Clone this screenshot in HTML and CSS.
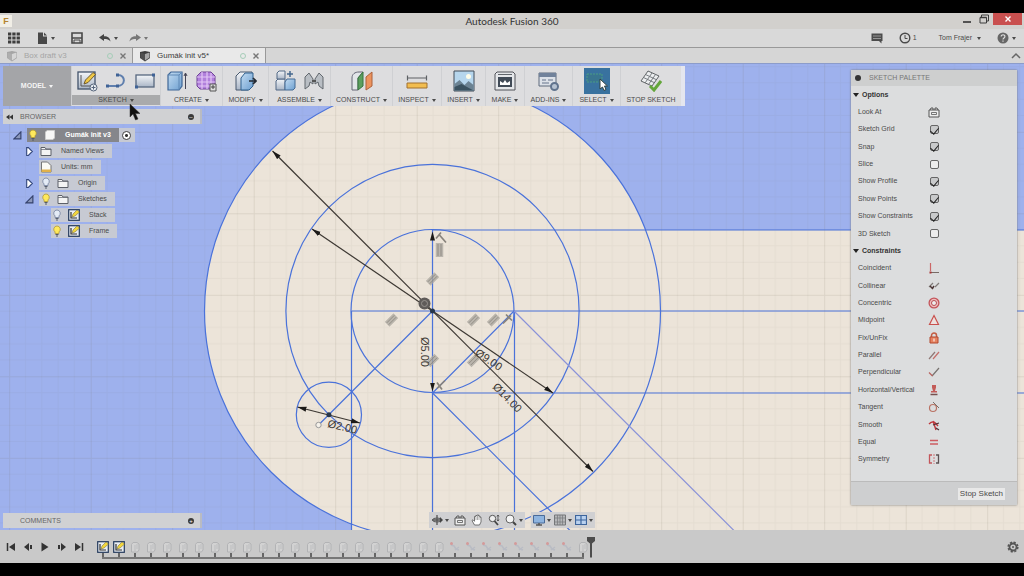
FILE: index.html
```html
<!DOCTYPE html>
<html lang="en">
<head>
<meta charset="utf-8">
<title>Autodesk Fusion 360</title>
<link rel="stylesheet" href="styles.css">
</head>
<body>
<svg class="defs" aria-hidden="true">
  <defs>
    <linearGradient id="blue" x1="0" y1="0" x2="1" y2="1"><stop offset="0" stop-color="#c3dcf2"/><stop offset="1" stop-color="#6d9fd0"/></linearGradient>
    <linearGradient id="steel" x1="0" y1="0" x2="0" y2="1"><stop offset="0" stop-color="#f4f6f9"/><stop offset="1" stop-color="#a9b5c6"/></linearGradient>
    <symbol id="folder" viewBox="0 0 12 12"><path d="M1 2.500h4l1 1.500h5v6.500H1z" fill="#f4f4f4" stroke="#5c6068"/><path d="M1 4.500h10" stroke="#5c6068" stroke-width=".7"/></symbol>
    <symbol id="bulb-on" viewBox="0 0 12 12"><path d="M6 1a3.300 3.300 0 0 1 2 5.900V8.500H4V6.900A3.300 3.300 0 0 1 6 1z" fill="#ffe95c" stroke="#b39b35" stroke-width=".8"/><path d="M4.500 9.500h3M5 11h2" stroke="#555b66"/></symbol>
    <symbol id="bulb-off" viewBox="0 0 12 12"><path d="M6 1a3.300 3.300 0 0 1 2 5.900V8.500H4V6.900A3.300 3.300 0 0 1 6 1z" fill="#e4ebf6" stroke="#7482a0" stroke-width=".8"/><path d="M4.500 9.500h3M5 11h2" stroke="#59606e"/></symbol>
    <symbol id="sketch" viewBox="0 0 12 12"><rect x=".7" y=".7" width="10.600" height="10.600" fill="#e9edf2" stroke="#243a5c" stroke-width="1.200"/><path d="M3 3v6h6" fill="none" stroke="#333" stroke-width="1.200"/><path d="M4 8l1-3 4-4 2.500 2-4.500 4z" fill="#f3d73c" stroke="#6b6330" stroke-width=".5"/></symbol>
    <symbol id="open" viewBox="0 0 8 8"><path d="M7 .8V7H.8z" fill="#8c98bc" stroke="#33406a"/></symbol>
    <symbol id="closed" viewBox="0 0 8 8"><path d="M1.500.5h1.500L6.500 4 3 7.500H1.500z" fill="#fff" stroke="#33477d"/></symbol>
    <symbol id="cube" viewBox="0 0 12 12"><path d="M1 2l5-1 5 1v6l-5 3.500L1 8z" fill="currentColor"/><path d="M1.500 2.500L6 4v7l-4.500-3z" fill="#fff" fill-opacity=".1"/><path d="M6 4l4.500-1.500v5L6 10.500z" fill="#fff" fill-opacity=".55"/></symbol>
    <symbol id="ghost" viewBox="0 0 12 12"><path d="M2.500 3.500L4 1.500h4l2 1.500v6l-1.500 2h-6z" fill="#d2d2d2" stroke="#b2b3b5"/><path d="M6 4v6M8 3v5" stroke="#bcbdbf"/></symbol>
    <symbol id="joint" viewBox="0 0 12 12"><path d="M2 4l3 1 2 3 3 1M6 9l4-3" fill="none" stroke="#b9bcc4" stroke-width="1.500"/><circle cx="2.500" cy="2.500" r="1.500" fill="#d49a9a"/></symbol>
    <symbol id="lookat" viewBox="0 0 12 12"><path d="M1 4h10v7H1zM2 4l1-2h2v2m2 0V2h2l1 2" fill="#ededed" stroke="#555"/><path d="M3.500 6.500h5v2h-5z" fill="none" stroke="#555" stroke-width=".8"/></symbol>
    <symbol id="x" viewBox="0 0 8 8"><path d="M1.500 1.500l5 5m0-5l-5 5" stroke="currentColor" stroke-width="1.400"/></symbol>
    <symbol id="plate" viewBox="0 0 16 8"><path d="M1 0h14v8H1z" fill="#aaa69e" fill-opacity=".75"/><path d="M2 2.500h12M2 5.500h12" stroke="#858178" stroke-width=".8"/></symbol>
  </defs>
</svg>

<div class="app">
  <header class="titlebar">
    <span class="logo">F</span>
    <h1 class="title">Autodesk Fusion 360</h1>
    <div class="window-buttons">
      <button aria-label="Minimize"><svg viewBox="0 0 10 10"><path d="M1 8h8" stroke="#444" stroke-width="1.800"/></svg></button>
      <button aria-label="Restore"><svg viewBox="0 0 10 10"><path d="M1 3.500h6.500v5.500H1zM2.500 3V1H9.500v6H8" fill="none" stroke="#3c3c3c"/><path d="M1 3.500h6.500" stroke="#3c3c3c" stroke-width="1.500"/></svg></button>
      <button class="close" aria-label="Close"><svg viewBox="0 0 8 8"><use href="#x"/></svg></button>
    </div>
  </header>

  <nav class="quickbar" aria-label="Quick access">
    <div class="quick-left">
      <button aria-label="Data panel"><svg viewBox="0 0 12 12"><path d="M0 2h12M0 6h12M0 10h12" stroke="#3e3e3e" stroke-width="3" stroke-dasharray="3.300 1"/></svg></button>
      <button class="caret" aria-label="File"><svg viewBox="0 0 12 12"><path d="M2 .5h5v4h4V12H2z" fill="#484848"/><path d="M8 .5L11 3.500H8z" fill="#484848"/></svg></button>
      <button aria-label="Save"><svg viewBox="0 0 12 12"><path d="M1 1h10v10H1z" fill="none" stroke="#484848" stroke-width="1.600"/><path d="M3 11V8h6v3" fill="none" stroke="#484848"/><path d="M1 6h10" stroke="#484848" stroke-width="1.500"/></svg></button>
      <button class="caret" aria-label="Undo"><svg viewBox="0 0 12 12"><path d="M0 5.500L5 2v2.300c4 0 6 1.700 6.500 5.200C10 7.500 8 7 5 7v2z" fill="#444"/></svg></button>
      <button class="caret muted" aria-label="Redo"><svg viewBox="0 0 12 12"><path d="M12 5.500L7 2v2.300C3 4.300 1 6 .5 9.500 2 7.500 4 7 7 7v2z" fill="#777"/></svg></button>
    </div>
    <div class="quick-right">
      <button aria-label="Comments"><svg viewBox="0 0 12 12"><path d="M.5 1.500h11v7.500h-1v2.500L8 9H.5z" fill="#4c4c4c"/><path d="M2 4h8M2 6.500h8" stroke="#aaa" stroke-width=".8"/></svg></button>
      <button class="jobs" aria-label="Job status"><svg viewBox="0 0 12 12"><circle cx="6" cy="6" r="4.800" fill="none" stroke="#4a4a4a" stroke-width="1.400"/><path d="M6 3v3.500h2.500" fill="none" stroke="#4a4a4a"/></svg>1</button>
      <button class="caret user">Tom Frajer</button>
      <button class="caret" aria-label="Help"><svg viewBox="0 0 12 12"><circle cx="6" cy="6" r="5.500" fill="#666"/><path d="M4.200 4.500c0-2.400 3.800-2.200 3.700 0C7.900 6 6 5.800 6 7.500M6 8.500v1.200" fill="none" stroke="#ddd" stroke-width="1.200"/></svg></button>
    </div>
  </nav>

  <div class="tabs">
    <div class="tab"><svg class="doc"><use href="#cube"/></svg><a href="#box">Box draft v3</a><i class="ring"></i><button aria-label="Close Box draft"><svg><use href="#x"/></svg></button></div>
    <div class="tab active"><svg class="doc"><use href="#cube"/></svg><a href="#gumak">Gumák init v5*</a><i class="ring"></i><button aria-label="Close Gumák init"><svg><use href="#x"/></svg></button></div>
    <button class="collapse" aria-label="Collapse toolbar"><svg viewBox="0 0 10 8"><path d="M1 6l4-4 4 4" fill="none" stroke="#666" stroke-width="1.500"/></svg></button>
  </div>

  <main class="workspace">
    <svg class="drawing" viewBox="0 63 1024 467" preserveAspectRatio="xMidYMid slice" role="img" aria-label="Sketch with concentric circles">
      <defs>
        <pattern id="grid" x="416.700" y="294.300" width="81.500" height="81.500" patternUnits="userSpaceOnUse">
          <path d="M16.300 0v81.500M32.600 0v81.500M48.900 0v81.500M65.200 0v81.500M0 16.300h81.500M0 32.600h81.500M0 48.900h81.500M0 65.200h81.500" stroke="#6a6350" stroke-opacity=".06"/>
          <path d="M.5 0v81.500M0 .5h81.500" stroke="#6a6350" stroke-opacity=".13"/>
        </pattern>
        <marker id="arrow" viewBox="0 0 9 6" refX="9" refY="3" markerWidth="9" markerHeight="6" markerUnits="userSpaceOnUse" orient="auto-start-reverse"><path d="M0 .5L9 3 0 5.500z" fill="#1c1a18"/></marker>
      </defs>
      <rect y="0" width="1024" height="600" fill="#9eb1ed"/>
      <g fill="#ece4d9">
        <circle cx="432.500" cy="310.500" r="228"/>
        <path d="M432.500 229.500H1024V600H351.500V310z"/>
      </g>
      <rect width="1024" height="600" fill="url(#grid)"/>
      <g fill="none" stroke="#4a72da" stroke-width="1.200">
        <circle cx="432.500" cy="310.500" r="228"/>
        <circle cx="432.500" cy="310.500" r="146.600"/>
        <circle cx="432.500" cy="310.500" r="81.500"/>
        <circle cx="328.900" cy="414.300" r="32.600"/>
        <path d="M432.500 229.500H1024M351.500 310.500H1024M432.500 392.500H1024M351.500 310.500V600M432.500 229.500V600M514.500 310.500V600"/>
        <path d="M320 423L432.500 310.500M514 310.500L432.500 392.500L620 580"/>
        <path d="M514 310.500L784 580" stroke="#8a92d8"/>
      </g>
      <g stroke="#3d3833" stroke-width="1.200" fill="none">
        <path d="M272.500 150.500L593 471" marker-start="url(#arrow)" marker-end="url(#arrow)"/>
        <path d="M312 228.500L553 392.500" marker-start="url(#arrow)" marker-end="url(#arrow)"/>
        <path d="M297.500 406.500L360 422.500" marker-start="url(#arrow)" marker-end="url(#arrow)"/>
        <path d="M432.500 231V391" stroke="none" marker-start="url(#arrow)" marker-end="url(#arrow)"/>
      </g>
      <g>
        <use href="#plate" x="-8" y="-4" width="16" height="8" transform="translate(439.500 249.500) rotate(90)"/>
        <use href="#plate" x="-7" y="-3.500" width="14" height="7" transform="translate(432.500 278.500) rotate(-45)"/>
        <use href="#plate" x="-7" y="-3.500" width="14" height="7" transform="translate(391.500 319.500) rotate(-45)"/>
        <use href="#plate" x="-7" y="-3.500" width="14" height="7" transform="translate(473.500 319.500) rotate(-45)"/>
        <use href="#plate" x="-7" y="-3.500" width="14" height="7" transform="translate(493.500 319.500) rotate(-45)"/>
        <use href="#plate" x="-7" y="-3.500" width="14" height="7" transform="translate(432.500 360) rotate(-45)"/>
        <use href="#plate" x="-7" y="-3.500" width="14" height="7" transform="translate(473.500 360) rotate(-45)"/>
        <path d="M436 238l5-6M439 234l7 8M503 323l8-8M506 314l6 6M437 388l8-8M437 382l5 7" fill="none" stroke="#88837c" stroke-width="1.700"/>
      </g>
      <circle cx="424.500" cy="303" r="6" fill="#5f5b59"/>
      <circle cx="424.500" cy="303" r="3" fill="none" stroke="#96918d"/>
      <circle cx="432.500" cy="310.500" r="2.500" fill="#26364c"/>
      <circle cx="328.900" cy="414.300" r="2.500" fill="#26364c"/>
      <circle cx="318.500" cy="424.500" r="2.700" fill="#f5f1ea" stroke="#999"/>
      <g class="dimension">
        <text transform="translate(425 351.500) rotate(90)" y="4">Ø5.00</text>
        <text transform="translate(489 359) rotate(34)" y="4">Ø9.00</text>
        <text transform="translate(507.500 397) rotate(45)" y="4">Ø14.00</text>
        <text transform="translate(342.500 426) rotate(13)" y="4">Ø2.00</text>
      </g>
    </svg>

    <div class="overlay">
      <div class="left">
        <div class="toolbar" role="toolbar" aria-label="Tools">
          <button class="model caret">MODEL</button>
          <div class="group sketch-group">
            <div class="tools">
              <button aria-label="Create sketch"><svg viewBox="0 0 22 22"><rect x="2" y="2" width="17" height="17" fill="url(#steel)" stroke="#42536b" stroke-width="1.300"/><path d="M5 5v11h10" fill="none" stroke="#555"/><path d="M8 14l1.500-4L17 2.500l2.500 2L12 12.500z" fill="#f0c844" stroke="#6f5a2d"/><circle cx="17.500" cy="17.500" r="3.500" fill="#e8edf3" stroke="#56657a"/><path d="M15.500 17.500h4m-2-2v4" stroke="#56657a"/></svg></button>
              <button aria-label="Line"><svg viewBox="0 0 22 22"><path d="M2 16h10c9 0 9-11 1-11" fill="none" stroke="#5f7fae" stroke-width="2"/><path d="M1 14.500h3v3H1zM11 14.500h3v3h-3zM11 3.500h3v3h-3z" fill="#3f6296"/></svg></button>
              <button aria-label="Rectangle"><svg viewBox="0 0 22 22"><rect x="2" y="5" width="18" height="12" fill="url(#steel)" stroke="#56677f" stroke-width="1.300"/><path d="M1 15.500h3v3H1zM18 3.500h3v3h-3z" fill="#3f6296"/></svg></button>
            </div>
            <button class="label caret">SKETCH</button>
          </div>
          <div class="group create">
            <div class="tools">
              <button aria-label="Extrude"><svg viewBox="0 0 22 22"><path d="M2 5l3-3h11v14l-3 4H2z" fill="url(#blue)" stroke="#3e6697" stroke-width="1.200"/><path d="M2 5h11v15M13 5l3-3" fill="none" stroke="#5f88b5"/><path d="M19.500 4v15M18 6l1.500-3L21 6" fill="none" stroke="#445"/></svg></button>
              <button aria-label="Form"><svg viewBox="0 0 22 22"><path d="M2 6l4-4h10l4 4v10l-4 3H5l-3-3z" fill="#b180dc" stroke="#6e4396"/><path d="M7 2v17M12 2v17M16 3v16M2 7h18M2 12h18M3 16h16" stroke="#e3c6f6" stroke-width="1.200"/><path d="M15 14h6v7h-6z" fill="#ddd" stroke="#555"/><path d="M16 17h4m-2-2v4" stroke="#444"/></svg></button>
            </div>
            <button class="label caret">CREATE</button>
          </div>
          <div class="group modify">
            <div class="tools"><button aria-label="Press pull"><svg viewBox="0 0 22 22"><path d="M1 6l4-4h12v14l-4 4H1z" fill="url(#steel)" stroke="#48596e"/><path d="M6 8l4-5h8v13l-4 4H6z" fill="url(#blue)" stroke="#2f618f"/><path d="M14 11h6m-2-3l3 3-3 3" fill="none" stroke="#252b33" stroke-width="1.700"/></svg></button></div>
            <button class="label caret">MODIFY</button>
          </div>
          <div class="group assemble">
            <div class="tools">
              <button aria-label="New component"><svg viewBox="0 0 22 22"><path d="M2 11l2-2h7v11H2z" fill="url(#steel)" stroke="#526985"/><path d="M11 12l2-3h8v9l-2 2h-8z" fill="url(#blue)" stroke="#456a94"/><path d="M3 3l2-2h6v8H3z" fill="url(#steel)" stroke="#526985"/><path d="M13 4h6m-3-3v6" stroke="#45688e" stroke-width="1.500"/></svg></button>
              <button aria-label="Joint"><svg viewBox="0 0 22 22"><path d="M2 19V7l4-4 4 6v5l-3-2-1 4zM20 19V7l-4-4-4 6v5l3-2 1 4z" fill="#b9bec4" stroke="#62686e"/><path d="M9 11h4" stroke="#555" stroke-width="2"/></svg></button>
            </div>
            <button class="label caret">ASSEMBLE</button>
          </div>
          <div class="group construct">
            <div class="tools"><button aria-label="Offset plane"><svg viewBox="0 0 22 22"><path d="M1 20V8c0-4 3-6 7-6h4l-5 6v12z" fill="#e2e5e9" stroke="#667"/><path d="M7 20V8l5-6v14z" fill="#5c9f5e" stroke="#36743e"/><path d="M15 20V7l6-5v14z" fill="#ec935e" stroke="#ad613b"/></svg></button></div>
            <button class="label caret">CONSTRUCT</button>
          </div>
          <div class="group inspect">
            <div class="tools"><button aria-label="Measure"><svg viewBox="0 0 22 22"><path d="M1 8h20M1.500 5.500v5M20.500 5.500v5" stroke="#5e6165" stroke-width="1.200"/><path d="M1 13h20v5H1z" fill="#f2bd50" stroke="#a1712e"/></svg></button></div>
            <button class="label caret">INSPECT</button>
          </div>
          <div class="group insert">
            <div class="tools"><button aria-label="Insert image"><svg viewBox="0 0 22 22"><path d="M1 1h20v20H1z" fill="#b6d6ed" stroke="#424d58"/><path d="M1.500 14l5-4 5 5 4-4 5 4v5.500h-19z" fill="#6c8393"/><path d="M1.500 17l7-3 12 6.500h-19z" fill="#3b5260"/><circle cx="15.500" cy="6.500" r="2.500" fill="#fffde9"/></svg></button></div>
            <button class="label caret">INSERT</button>
          </div>
          <div class="group make">
            <div class="tools"><button aria-label="3D print"><svg viewBox="0 0 22 22"><path d="M1 4l2-2h16l2 2v16H1z" fill="#e5e7ea" stroke="#505258"/><path d="M4 7h14v10H4z" fill="#414b57"/><path d="M6 15v-4l3 2 2-3 2 3 3-2v4z" fill="#fff"/><path d="M4 4.500h14" stroke="#60656b"/></svg></button></div>
            <button class="label caret">MAKE</button>
          </div>
          <div class="group addins">
            <div class="tools"><button aria-label="Scripts"><svg viewBox="0 0 22 22"><path d="M1 3h17v13H1z" fill="#dce1e8" stroke="#5f6b7d"/><path d="M1 3h17v4H1z" fill="#71829b"/><path d="M4 10h4m2 0h5M4 13h7" stroke="#66758b"/><circle cx="16.500" cy="16.500" r="3.500" fill="#b7c3d2" stroke="#61748e" stroke-width="2"/></svg></button></div>
            <button class="label caret">ADD-INS</button>
          </div>
          <div class="group select">
            <div class="tools"><button class="pressed" aria-label="Select"><svg viewBox="0 0 26 26"><path d="M3 6h15v8H3z" fill="#39758f" stroke="#4b9c84" stroke-dasharray="2 1"/><path d="M16 11v10l2.500-2 1.500 3.500 2-1-1.500-3.500h3z" fill="#fff" stroke="#344"/></svg></button></div>
            <button class="label caret">SELECT</button>
          </div>
          <div class="group stop">
            <div class="tools"><button aria-label="Stop sketch"><svg viewBox="0 0 22 22"><path d="M8 1l11 5-7 10L1 11z" fill="#eceef0" stroke="#5e6265"/><path d="M12 3L5 13M15.500 4.500L8.500 14.500M5.500 4.500l10.500 5M3.500 7.500l10.500 5" stroke="#777b80"/><path d="M10 16l4 4 7-9" fill="none" stroke="#64a63b" stroke-width="3"/></svg></button></div>
            <button class="label">STOP SKETCH</button>
          </div>
        </div>

        <section class="browser">
          <header class="panel-bar"><button class="rewind" aria-label="Hide browser"><svg viewBox="0 0 8 6"><path d="M4 0v6L0 3zM8 0v6L4 3z" fill="#333"/></svg></button><h2>BROWSER</h2><button class="dot" aria-label="Browser options">–</button></header>
          <ul class="tree">
            <li class="root"><svg class="twist"><use href="#open"/></svg><span class="chip dark"><svg><use href="#bulb-on"/></svg><svg viewBox="0 0 12 12"><path d="M1.500 3L3 1.500h7.500V9L9 10.500H1.500z" fill="#f7f7f7" stroke="#ccc"/></svg><b>Gumák init v3</b></span><label class="activate"><input type="radio" name="active" checked aria-label="Activate"></label></li>
            <li class="child"><svg class="twist"><use href="#closed"/></svg><span class="chip"><svg><use href="#folder"/></svg>Named Views</span></li>
            <li class="child"><i class="twist"></i><span class="chip"><svg viewBox="0 0 12 12"><path d="M1.500 1h6L11 4.500V11H1.500z" fill="#fbfaf4" stroke="#777"/><path d="M1.500 8.500H11V11H1.500z" fill="#e1b14a"/></svg>Units: mm</span></li>
            <li class="child"><svg class="twist"><use href="#closed"/></svg><span class="chip"><svg><use href="#bulb-off"/></svg><svg><use href="#folder"/></svg>Origin</span></li>
            <li class="child"><svg class="twist"><use href="#open"/></svg><span class="chip"><svg><use href="#bulb-on"/></svg><svg><use href="#folder"/></svg>Sketches</span></li>
            <li class="leaf"><span class="chip"><svg><use href="#bulb-off"/></svg><svg><use href="#sketch"/></svg>Stack</span></li>
            <li class="leaf"><span class="chip"><svg><use href="#bulb-on"/></svg><svg><use href="#sketch"/></svg>Frame</span></li>
          </ul>
        </section>

        <section class="comments panel-bar"><h2>COMMENTS</h2><button class="dot" aria-label="Add comment">+</button></section>
      </div>

      <aside class="palette">
        <header><i class="bullet"></i><h2>SKETCH PALETTE</h2></header>
        <div class="rows">
          <h3>Options</h3>
          <div class="row"><label for="look">Look At</label><button id="look"><svg><use href="#lookat"/></svg></button></div>
          <div class="row"><label for="g">Sketch Grid</label><input id="g" type="checkbox" checked></div>
          <div class="row"><label for="s">Snap</label><input id="s" type="checkbox" checked></div>
          <div class="row"><label for="sl">Slice</label><input id="sl" type="checkbox"></div>
          <div class="row"><label for="pr">Show Profile</label><input id="pr" type="checkbox" checked></div>
          <div class="row"><label for="po">Show Points</label><input id="po" type="checkbox" checked></div>
          <div class="row"><label for="co">Show Constraints</label><input id="co" type="checkbox" checked></div>
          <div class="row"><label for="td">3D Sketch</label><input id="td" type="checkbox"></div>
          <h3>Constraints</h3>
          <div class="row"><label for="c1">Coincident</label><button id="c1"><svg viewBox="0 0 12 12"><path d="M2.500 1v8" stroke="#c66" stroke-width="1.200"/><path d="M3 10.500h8" stroke="#776b66"/><path d="M1.500 9.500h2v2h-2z" fill="#a33"/></svg></button></div>
          <div class="row"><label for="c2">Collinear</label><button id="c2"><svg viewBox="0 0 12 12"><path d="M1 7l4-4M7 7l4-4" stroke="#807b78" stroke-width="1.200"/><path d="M2 6l3 3M4 9l2-3" stroke="#4b3535" stroke-width="1.500"/></svg></button></div>
          <div class="row"><label for="c3">Concentric</label><button id="c3"><svg viewBox="0 0 12 12"><circle cx="6" cy="6" r="4.900" fill="#eebcbc" stroke="#c4545a" stroke-width="1.300"/><circle cx="6" cy="6" r="2.500" fill="#eee" stroke="#b84c52"/></svg></button></div>
          <div class="row"><label for="c4">Midpoint</label><button id="c4"><svg viewBox="0 0 12 12"><path d="M6 1.500l4.500 9h-9z" fill="#eee1df" stroke="#c9504d" stroke-width="1.200"/></svg></button></div>
          <div class="row"><label for="c5">Fix/UnFix</label><button id="c5"><svg viewBox="0 0 12 12"><path d="M3.500 5V3.500a2.500 2.500 0 0 1 5 0V5" fill="none" stroke="#c35d42" stroke-width="1.500"/><path d="M2 5h8v6H2z" fill="#e68361" stroke="#b3492e"/><path d="M6 6.500v3" stroke="#fff"/></svg></button></div>
          <div class="row"><label for="c6">Parallel</label><button id="c6"><svg viewBox="0 0 12 12"><path d="M1 10l6-7" stroke="#8f7774" stroke-width="1.200"/><path d="M5 10l6-7" stroke="#c46e69" stroke-width="1.200"/></svg></button></div>
          <div class="row"><label for="c7">Perpendicular</label><button id="c7"><svg viewBox="0 0 12 12"><path d="M4 10l7-8" stroke="#77716e" stroke-width="1.200"/><path d="M1 6.500L4.500 10" stroke="#b9625f" stroke-width="1.200"/></svg></button></div>
          <div class="row"><label for="c8">Horizontal/Vertical</label><button id="c8"><svg viewBox="0 0 12 12"><path d="M4 1h4v2.500L7 7h2v1.500H3V7h2L4 3.500z" fill="#c35b58"/><path d="M2.500 10.500h7" stroke="#78504e" stroke-width="1.500"/></svg></button></div>
          <div class="row"><label for="c9">Tangent</label><button id="c9"><svg viewBox="0 0 12 12"><circle cx="5" cy="7" r="3.500" fill="none" stroke="#ba7264" stroke-width="1.200"/><path d="M5 1l6 6" stroke="#796d66"/></svg></button></div>
          <div class="row"><label for="c10">Smooth</label><button id="c10"><svg viewBox="0 0 12 12"><path d="M1 5c4-4 6-2 9 2M5 2l3 9" fill="none" stroke="#bf363b" stroke-width="1.400"/><path d="M5 6l6-2M8 9l3 2" stroke="#4d3539" stroke-width="1.200"/></svg></button></div>
          <div class="row"><label for="c11">Equal</label><button id="c11"><svg viewBox="0 0 12 12"><path d="M2 4.500h8M2 8h8" stroke="#cc5c61" stroke-width="1.300"/></svg></button></div>
          <div class="row"><label for="c12">Symmetry</label><button id="c12"><svg viewBox="0 0 12 12"><path d="M4 2H1.500v8H4" fill="none" stroke="#c4555a" stroke-width="1.300"/><path d="M8 2h2.500v8H8" fill="none" stroke="#5b5052" stroke-width="1.300"/><path d="M6 1v10" stroke="#d07579" stroke-dasharray="2 1"/></svg></button></div>
        </div>
        <footer><button class="finish">Stop Sketch</button></footer>
      </aside>
    </div>

    <div class="navbar">
      <div>
        <button class="caret" aria-label="Orbit"><svg viewBox="0 0 12 12"><path d="M6 1v10M1 6h10" stroke="#555" stroke-width="1.300"/><ellipse cx="6" cy="6" rx="4.500" ry="2" fill="none" stroke="#555"/><path d="M9 3l3 3-3 3z" fill="#444"/></svg></button>
        <button aria-label="Look at"><svg><use href="#lookat"/></svg></button>
        <button aria-label="Pan"><svg viewBox="0 0 12 12"><path d="M3.500 11L1 6.500l1-.7 1.500 1.500V2.500h1.300V1.500h1.400V1h1.400v1h1.300v1.200H10V8l-1.500 3z" fill="#fff" stroke="#555" stroke-width=".8"/><path d="M5 2.500V6m1.500-4v4M8 2.500V6" stroke="#777" stroke-width=".6"/></svg></button>
        <button aria-label="Zoom"><svg viewBox="0 0 12 12"><circle cx="4.500" cy="4.500" r="3.200" fill="#eee" stroke="#555"/><path d="M6.500 7l3.500 4" stroke="#444" stroke-width="1.800"/><path d="M10 1v6M9 2.500L10 1l1 1.500M9 5.500L10 7l1-1.500" fill="none" stroke="#444" stroke-width=".8"/></svg></button>
        <button class="caret" aria-label="Fit"><svg viewBox="0 0 12 12"><circle cx="5" cy="5" r="4" fill="#f4f4f4" stroke="#666"/><path d="M8 8l3 3" stroke="#444" stroke-width="2"/></svg></button>
      </div>
      <div>
        <button class="caret" aria-label="Display"><svg viewBox="0 0 12 12"><path d="M.5 1.500h11V9H.5z" fill="#8eb4df" stroke="#496a98"/><path d="M3 11h6M6 9v2" stroke="#555" stroke-width="1.500"/></svg></button>
        <button class="caret" aria-label="Grid"><svg viewBox="0 0 12 12"><path d="M.5 1h11v10H.5z" fill="#b6b7b9" stroke="#757779"/><path d="M3.500 1v10M6 1v10M8.500 1v10M1 4h10M1 8h10" stroke="#77797b" stroke-width=".7"/></svg></button>
        <button class="caret" aria-label="Viewports"><svg viewBox="0 0 12 12"><path d="M.5 1.500h11v9H.5zM6 1.500v9M.5 6h11" fill="#b9d1ef" stroke="#3d659c" stroke-width="1.200"/></svg></button>
      </div>
    </div>

    <svg class="cursor" viewBox="0 0 12 18" aria-hidden="true"><path d="M1 1v13l3-3 2.500 6 2.500-1-2.500-5.500H11z" fill="#111" stroke="#333" stroke-width=".5"/></svg>
  </main>

  <footer class="timeline">
    <div class="playback">
      <button aria-label="First"><svg viewBox="0 0 10 10"><path d="M1.500 1v8" stroke="#333" stroke-width="1.500"/><path d="M9 1v8L3 5z" fill="#333"/></svg></button>
      <button aria-label="Back"><svg viewBox="0 0 10 10"><path d="M6 1v8L1 5z" fill="#333"/><path d="M8 3v4" stroke="#333" stroke-width="2"/></svg></button>
      <button aria-label="Play"><svg viewBox="0 0 10 10"><path d="M1.500.5v9l7-4.500z" fill="#333"/></svg></button>
      <button aria-label="Forward"><svg viewBox="0 0 10 10"><path d="M4 1v8l5-4z" fill="#333"/><path d="M2 3v4" stroke="#333" stroke-width="2"/></svg></button>
      <button aria-label="Last"><svg viewBox="0 0 10 10"><path d="M8.500 1v8" stroke="#333" stroke-width="1.500"/><path d="M1 1v8l6-4z" fill="#333"/></svg></button>
    </div>
    <ol class="history">
      <li><svg><use href="#sketch"/></svg></li><li><svg><use href="#sketch"/></svg></li>
      <li><svg><use href="#ghost"/></svg></li><li><svg><use href="#ghost"/></svg></li><li><svg><use href="#ghost"/></svg></li><li><svg><use href="#ghost"/></svg></li><li><svg><use href="#ghost"/></svg></li>
      <li><svg><use href="#ghost"/></svg></li><li><svg><use href="#ghost"/></svg></li><li><svg><use href="#ghost"/></svg></li><li><svg><use href="#ghost"/></svg></li><li><svg><use href="#ghost"/></svg></li>
      <li><svg><use href="#ghost"/></svg></li><li><svg><use href="#ghost"/></svg></li><li><svg><use href="#ghost"/></svg></li><li><svg><use href="#ghost"/></svg></li><li><svg><use href="#ghost"/></svg></li>
      <li><svg><use href="#ghost"/></svg></li><li><svg><use href="#ghost"/></svg></li><li><svg><use href="#ghost"/></svg></li><li><svg><use href="#ghost"/></svg></li><li><svg><use href="#ghost"/></svg></li>
      <li><svg><use href="#joint"/></svg></li><li><svg><use href="#joint"/></svg></li><li><svg><use href="#joint"/></svg></li><li><svg><use href="#joint"/></svg></li>
      <li><svg><use href="#joint"/></svg></li><li><svg><use href="#joint"/></svg></li><li><svg><use href="#joint"/></svg></li><li><svg><use href="#joint"/></svg></li>
      <li><svg><use href="#ghost"/></svg></li>
    </ol>
    <svg class="playhead" viewBox="0 0 10 22"><path d="M1 1h8v4L6 7.500v14H4v-14L1 5z" fill="#4c4c4c"/></svg>
    <button class="settings" aria-label="Timeline settings"><svg viewBox="0 0 12 12"><circle cx="6" cy="6" r="4.800" fill="none" stroke="#555" stroke-width="1.600" stroke-dasharray="2.200 1.570"/><circle cx="6" cy="6" r="3.500" fill="none" stroke="#555" stroke-width="1.800"/><circle cx="6" cy="6" r="1" fill="#555"/></svg></button>
  </footer>
</div>
</body>
</html>
```
FILE: styles.css
```css
* { box-sizing: border-box; margin: 0; padding: 0; }

body {
  background: #000;
  color: #4a4a4a;
  font: 7px/10px "Liberation Sans", Arial, sans-serif;
}

button {
  display: flex;
  align-items: center;
  border: 0;
  background: none;
  color: inherit;
  font: inherit;
  white-space: nowrap;
}

h1, h2 { font-size: inherit; font-weight: 400; }
a { color: inherit; text-decoration: none; }
ul, ol { list-style: none; }
svg { flex: none; width: 12px; height: 12px; }
.defs { position: absolute; width: 0; height: 0; }

.caret::after {
  content: "";
  margin-left: 3px;
  border: 2px solid transparent;
  border-top: 3px solid currentColor;
  border-bottom: 0;
}

.app {
  display: flex;
  flex-direction: column;
  height: 100vh;
  padding: 13px 0;
}

/* Window chrome */
.titlebar {
  display: grid;
  grid-template-columns: 1fr auto 1fr;
  align-items: center;
  height: 16px;
  background: #d2d0cd;
}
.logo {
  justify-self: start;
  width: 12px;
  background: #f1eee6;
  color: #b5832e;
  font: bold 9px/12px "Liberation Sans", sans-serif;
  text-align: center;
}
.title { font: 10px/14px Lato, "Noto Sans", sans-serif; color: #333; }
.window-buttons { display: flex; gap: 7px; align-self: start; justify-self: end; padding-right: 2px; }
.window-buttons button { justify-content: center; height: 12px; }
.window-buttons svg { width: 10px; height: 10px; }
.window-buttons .close { width: 29px; margin-left: -3px; background: #c9504f; color: #fff; }
.window-buttons .close svg { width: 8px; height: 8px; }

.quickbar {
  display: flex;
  align-items: center;
  justify-content: space-between;
  height: 19px;
  padding: 0 8px;
  border-bottom: 1px solid #999;
  background: #d9d9d9;
}
.quick-left, .quick-right { display: flex; align-items: center; }
.quick-left { gap: 16px; }
.quick-left .muted { margin-left: -5px; color: #777; }
.quick-right { gap: 16px; }
.jobs { gap: 2px; }
.user { margin-left: 6px; }
.user::after { margin-left: 5px; }

.tabs { display: flex; height: 15px; background: #d6d6d6; }
.tab {
  display: flex;
  align-items: center;
  width: 133px;
  padding: 0 5px 0 6px;
  border-right: 1px solid #999;
  color: #a5a5a5;
  font-size: 8px;
}
.tab .doc { margin-right: 6px; }
.tab button { color: #777; }
.tab button svg { width: 8px; height: 8px; }
.tab.active { background: #e9e9e9; color: #3c3c3c; }
.ring { width: 6px; height: 6px; margin: 0 6px 0 auto; border: 1px solid #a5cdb8; border-radius: 50%; }
.collapse { margin-left: auto; padding-right: 3px; }
.collapse svg { width: 10px; height: 8px; }

/* Canvas */
.workspace { position: relative; flex: 1; min-height: 0; overflow: hidden; border-top: 1px solid #8c9cca; }
.drawing { position: absolute; inset: 0; width: 100%; height: 100%; }
.dimension { fill: #3c3833; font: 11px "Liberation Sans", sans-serif; text-anchor: middle; }
.overlay { position: absolute; inset: 0; display: flex; justify-content: space-between; padding: 2px 7px 2px 3px; }
.left { display: flex; flex-direction: column; align-items: flex-start; }
.cursor { position: absolute; left: 129px; top: 39px; width: 12px; height: 18px; }

.toolbar { display: flex; height: 40px; background: #dddddf; border-right: 4px solid #e5e6ee; }
.model {
  justify-content: center;
  width: 68px;
  background: #a4a5a8;
  color: #f4f4f4;
  font-weight: 700;
}
.group { display: flex; flex-direction: column; border-left: 1px solid #cfd0d3; }
.tools { display: flex; flex: 1; align-items: center; justify-content: center; gap: 7px; }
.tools svg { width: 22px; height: 22px; }
.label { justify-content: center; height: 10px; margin-bottom: 1px; }
.sketch-group { width: 89px; }
.sketch-group .label { background: #a9aaac; }
.create, .assemble, .construct { width: 62px; }
.modify { width: 46px; }
.inspect { width: 49px; }
.insert { width: 44px; }
.make { width: 39px; }
.addins, .select { width: 48px; }
.stop { width: 61px; }
.pressed { background: #39729f; }
.pressed svg { width: 26px; height: 26px; }

.panel-bar {
  display: flex;
  align-items: center;
  width: 199px;
  height: 15px;
  padding: 0 6px 0 17px;
  border-right: 2px solid #b9bbc2;
  background: #d0d1d3;
  color: #666;
}
.browser { margin-top: 3px; }
.browser .panel-bar { padding-left: 3px; }
.rewind { margin-right: 7px; }
.rewind svg { width: 7px; height: 6px; }
.dot {
  justify-content: center;
  width: 6px;
  height: 6px;
  margin-left: auto;
  border-radius: 50%;
  background: #3a3a3a;
  color: #fff;
  font-size: 6px;
  line-height: 6px;
}
.comments { margin-top: auto; }

.tree { padding-top: 3px; }
.tree li { display: flex; align-items: center; height: 16px; padding-left: 22px; }
.tree .root { padding-left: 10px; }
.tree .leaf { padding-left: 48px; }
.twist { width: 9px; height: 9px; margin-right: 5px; }
.chip { display: flex; align-items: center; gap: 5px; height: 14px; padding-right: 8px; background: #c7cad3; white-space: nowrap; }
.chip svg:last-of-type { margin-right: 4px; }
.child .chip { padding-left: 1px; }
.dark { background: #85868b; color: #fff; }
.activate { display: flex; align-items: center; justify-content: center; width: 16px; height: 14px; background: #c7cad3; }
.activate input {
  width: 9px;
  height: 9px;
  appearance: none;
  border: 1px solid #444;
  border-radius: 50%;
  background: radial-gradient(#333 0 1px, #fff 2px);
}

/* Sketch palette */
.palette {
  display: flex;
  flex-direction: column;
  width: 166px;
  margin: 4px 0 23px;
  background: #dcddde;
  box-shadow: 0 0 2px #777;
}
.palette header { display: flex; align-items: center; height: 16px; padding-left: 4px; background: #cecfcf; color: #777; }
.bullet { width: 6px; height: 6px; margin-right: 8px; border-radius: 50%; background: #333; }
.rows { display: grid; flex: 1; grid-auto-rows: 1fr; padding-bottom: 13px; }
.rows h3 { display: flex; align-items: center; gap: 3px; padding-left: 2px; font-size: 7px; color: #333; }
.rows h3::before { content: ""; border: 3px solid transparent; border-top: 4px solid #222; border-bottom: 0; }
.row { display: grid; grid-template-columns: 70px 12px; align-items: center; padding-left: 7px; }
.row input {
  display: grid;
  place-items: center;
  justify-self: center;
  width: 9px;
  height: 9px;
  appearance: none;
  border: 1px solid #666;
  border-radius: 2px;
  background: #ececec;
}
.row input:checked { background: #c9cacb; }
.row input:checked::after {
  content: "";
  width: 4px;
  height: 7px;
  border: solid #222;
  border-width: 0 1px 1px 0;
  transform: rotate(40deg);
}
.palette footer { display: flex; align-items: center; justify-content: flex-end; height: 24px; padding-right: 12px; border-top: 1px solid #bbb; background: #cecfd0; }
.finish { height: 12px; padding: 0 2px; background: #e8e8e8; font-size: 8px; }

.navbar {
  position: absolute;
  bottom: 2px;
  left: 50%;
  display: flex;
  gap: 6px;
  transform: translateX(-50%);
}
.navbar div { display: flex; align-items: center; gap: 5px; height: 16px; padding: 0 2px; background: #d0d0d2; }
.navbar .caret::after { margin-left: 2px; }
.navbar div + div { gap: 3px; }

/* Timeline */
.timeline { display: flex; align-items: center; height: 33px; padding: 0 5px 0 6px; background: #c9c9c9; }
.playback { display: flex; gap: 7px; width: 91px; }
.playback svg { width: 10px; height: 10px; }
.history {
  display: flex;
  align-self: flex-end;
  margin-bottom: 4px;
  padding-bottom: 2px;
  background: linear-gradient(#777, #777) 5px 100% / calc(100% - 14px) 2px no-repeat content-box border-box;
  background-origin: border-box;
  background-clip: border-box;
}
.history li { width: 16px; height: 16px; }
.history li::after { content: ""; display: block; width: 2px; height: 4px; margin-left: 5px; background: #666; }
.history svg { display: block; }
.playhead { width: 10px; height: 22px; margin-left: -7px; }
.settings { margin-left: auto; }
```
